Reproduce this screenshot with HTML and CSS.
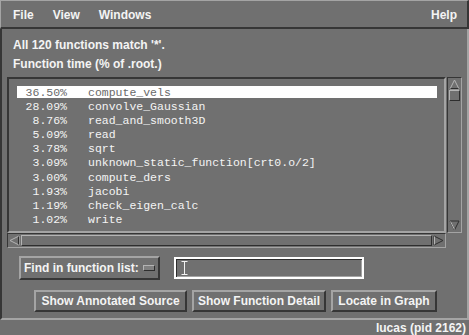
FILE: index.html
```html
<!DOCTYPE html>
<html>
<head>
<meta charset="utf-8">
<link rel="stylesheet" href="styles.css">
</head>
<body>
<div class="window">
  <div class="menubar">
    <span class="menu">File</span>
    <span class="menu">View</span>
    <span class="menu">Windows</span>
    <span class="menu help">Help</span>
  </div>
  <div class="main">
    <div class="label">All 120 functions match '*'.</div>
    <div class="label">Function time (% of .root.)</div>
    <div class="scrolled">
      <div class="list">
        <div class="row sel"><span class="pct">36.50%</span><span class="name">compute_vels</span></div>
        <div class="row"><span class="pct">28.09%</span><span class="name">convolve_Gaussian</span></div>
        <div class="row"><span class="pct">8.76%</span><span class="name">read_and_smooth3D</span></div>
        <div class="row"><span class="pct">5.09%</span><span class="name">read</span></div>
        <div class="row"><span class="pct">3.78%</span><span class="name">sqrt</span></div>
        <div class="row"><span class="pct">3.09%</span><span class="name">unknown_static_function[crt0.o/2]</span></div>
        <div class="row"><span class="pct">3.00%</span><span class="name">compute_ders</span></div>
        <div class="row"><span class="pct">1.93%</span><span class="name">jacobi</span></div>
        <div class="row"><span class="pct">1.19%</span><span class="name">check_eigen_calc</span></div>
        <div class="row"><span class="pct">1.02%</span><span class="name">write</span></div>
      </div>
      <div class="vscroll">
        <svg class="arrow" width="11" height="11" viewBox="0 0 11 11"><polygon points="5.5,1 10,10 1,10" fill="#707070" stroke="#b4b4b4" stroke-width="1"/><line x1="1.5" y1="9.5" x2="9.5" y2="9.5" stroke="#2e2e2e"/></svg>
        <div class="vthumb"></div>
        <div class="vtrough"></div>
        <svg class="arrow" width="11" height="11" viewBox="0 0 11 11"><polygon points="1,1 10,1 5.5,10" fill="#707070" stroke="#2e2e2e" stroke-width="1"/><line x1="1.5" y1="1.5" x2="5.5" y2="9.5" stroke="#b4b4b4"/></svg>
      </div>
      <div class="hscroll">
        <svg class="arrow" width="11" height="11" viewBox="0 0 11 11"><polygon points="1,5.5 10,1 10,10" fill="#707070" stroke="#b4b4b4" stroke-width="1"/><line x1="9.5" y1="1.5" x2="9.5" y2="9.5" stroke="#2e2e2e"/></svg>
        <div class="hthumb"></div>
        <svg class="arrow" width="11" height="11" viewBox="0 0 11 11"><polygon points="1,1 10,5.5 1,10" fill="#707070" stroke="#2e2e2e" stroke-width="1"/><line x1="1.5" y1="1.5" x2="1.5" y2="9.5" stroke="#b4b4b4"/></svg>
      </div>
      <div class="corner"></div>
    </div>
    <div class="findrow">
      <div class="option">Find in function list:<span class="indicator"></span></div>
      <div class="field"><svg class="ibeam" width="7" height="14" viewBox="0 0 7 14"><path d="M0.5 0.5H6.5M3.5 0.5V13.5M0.5 13.5H6.5" stroke="#f2f2f2" fill="none" stroke-width="1"/></svg></div>
    </div>
    <div class="buttons">
      <div class="btn b1">Show Annotated Source</div>
      <div class="btn b2">Show Function Detail</div>
      <div class="btn b3">Locate in Graph</div>
    </div>
  </div>
  <div class="status">lucas (pid 2162)</div>
</div>
</body>
</html>
```
FILE: styles.css
```css
html, body {
  margin: 0;
  padding: 0;
  background: #707070;
}
body {
  width: 469px;
  height: 335px;
  overflow: hidden;
  font-family: "Liberation Sans", Arial, sans-serif;
  font-weight: bold;
  font-size: 12px;
  color: #f4f4f4;
}
.window {
  width: 469px;
  height: 335px;
  display: flex;
  flex-direction: column;
}
.menubar {
  box-sizing: border-box;
  height: 29px;
  display: flex;
  align-items: center;
  gap: 19px;
  padding: 2px 10px 0 12px;
  border-style: solid;
  border-width: 1px 2px 2px 1px;
  border-color: #a4a4a4 #363636 #363636 #a4a4a4;
}
.help {
  margin-left: auto;
}
.main {
  box-sizing: border-box;
  height: 291px;
  border-left: 2px solid #363636;
  border-right: 2px solid #a4a4a4;
  border-bottom: 2px solid #a4a4a4;
  padding: 7px 0 0 5px;
}
.label {
  height: 19px;
  line-height: 19px;
  padding-left: 6px;
}
.scrolled {
  display: grid;
  grid-template-columns: 439px 15px;
  grid-template-rows: 156px 15px;
  column-gap: 1px;
  margin-top: 3px;
}
.list {
  box-sizing: border-box;
  border: 2px solid;
  border-color: #363636 #a4a4a4 #a4a4a4 #363636;
  padding: 7px 7px 0 8px;
  font-family: "Liberation Mono", "Courier New", monospace;
  font-weight: normal;
  font-size: 11.5px;
  overflow: hidden;
}
.row {
  height: 12.1px;
  line-height: 13px;
  margin-bottom: 2px;
  display: flex;
  white-space: pre;
  color: #f4f4f4;
}
.row.sel {
  background: #ffffff;
  color: #6a6a6a;
}
.pct {
  width: 43px;
  margin-left: 7px;
  text-align: right;
}
.name {
  margin-left: 21px;
}
.vscroll {
  box-sizing: border-box;
  border: 1px solid;
  border-color: #363636 #a4a4a4 #a4a4a4 #363636;
  display: flex;
  flex-direction: column;
  align-items: center;
  padding: 1px 0;
}
.arrow {
  display: block;
  flex: none;
}
.vthumb {
  box-sizing: border-box;
  width: 11px;
  height: 11px;
  border: 1px solid;
  border-color: #b4b4b4 #2e2e2e #2e2e2e #b4b4b4;
  flex: none;
}
.vtrough {
  flex: 1;
}
.hscroll {
  box-sizing: border-box;
  border: 1px solid;
  border-color: #363636 #a4a4a4 #a4a4a4 #363636;
  display: flex;
  align-items: center;
  padding: 0 1px;
  gap: 1px;
}
.hthumb {
  box-sizing: border-box;
  flex: 1;
  height: 11px;
  border: 1px solid;
  border-color: #b4b4b4 #2e2e2e #2e2e2e #b4b4b4;
}
.findrow {
  display: flex;
  align-items: center;
  margin-top: 8px;
  padding-left: 12px;
  gap: 14px;
}
.option {
  box-sizing: border-box;
  width: 141px;
  height: 24px;
  border: 2px solid;
  border-color: #a4a4a4 #363636 #363636 #a4a4a4;
  display: flex;
  align-items: center;
  padding-left: 3px;
}
.indicator {
  box-sizing: border-box;
  width: 12px;
  height: 6px;
  margin-left: auto;
  margin-right: 3px;
  border: 1px solid;
  border-color: #b4b4b4 #2e2e2e #2e2e2e #b4b4b4;
  background: #808080;
}
.field {
  box-sizing: border-box;
  width: 190px;
  height: 22px;
  border: 2px solid #ffffff;
  box-shadow: inset 1px 1px 0 #2e2e2e, inset -1px -1px 0 #a4a4a4;
  display: flex;
  align-items: center;
  padding-left: 5px;
}
.ibeam {
  display: block;
}
.buttons {
  display: flex;
  justify-content: center;
  gap: 5px;
  margin-top: 10px;
  padding-right: 3px;
}
.btn {
  box-sizing: border-box;
  height: 22px;
  line-height: 18px;
  border: 2px solid;
  border-color: #a4a4a4 #363636 #363636 #a4a4a4;
  text-align: center;
}
.b1 { width: 153px; }
.b2 { width: 134px; }
.b3 { width: 106px; }
.status {
  flex: 1;
  display: flex;
  align-items: center;
  justify-content: flex-end;
  padding-right: 3px;
}
```
